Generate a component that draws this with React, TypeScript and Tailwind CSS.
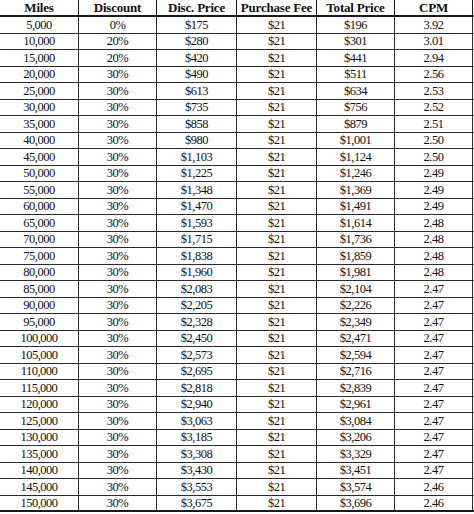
import React from "react";

const miles = Array.from({ length: 30 }, (_, i) => (5000 * (i + 1)).toLocaleString("en-US"));
const disc = ["0%", "20%", "20%", ...Array(27).fill("30%")];
const price = ["175","280","420","490","613","735","858","980","1,103","1,225","1,348","1,470","1,593","1,715","1,838","1,960","2,083","2,205","2,328","2,450","2,573","2,695","2,818","2,940","3,063","3,185","3,308","3,430","3,553","3,675"];
const total = ["196","301","441","511","634","756","879","1,001","1,124","1,246","1,369","1,491","1,614","1,736","1,859","1,981","2,104","2,226","2,349","2,471","2,594","2,716","2,839","2,961","3,084","3,206","3,329","3,451","3,574","3,696"];
const cpm = ["3.92","3.01","2.94","2.56","2.53","2.52","2.51","2.50","2.50","2.49","2.49","2.49","2.48","2.48","2.48","2.48",...Array(12).fill("2.47"),"2.46","2.46"];

const headers = ["Miles", "Discount", "Disc. Price", "Purchase Fee", "Total Price", "CPM"];

export default function App() {
  return (
    <div
      className="w-[474px] h-[514px] bg-white text-[#111] overflow-hidden"
      style={{ fontFamily: '"Liberation Serif", "Times New Roman", serif' }}
    >
      <div className="grid grid-cols-[79px_78px_80px_80px_78px_78px] h-[17px] border-b-2 border-[#1a1a1a]">
        {headers.map((h) => (
          <div key={h} className="border-r border-[#1a1a1a] flex items-center justify-center font-bold text-[13px] leading-none whitespace-nowrap tracking-[-0.2px] pb-[1px]">
            {h}
          </div>
        ))}
      </div>
      {miles.map((m, i) => (
        <div
          key={m}
          className={
            "grid grid-cols-[79px_78px_80px_80px_78px_78px] h-[16.5px] " +
            (i === 29 ? "border-b-2 border-[#1a1a1a]" : "border-b border-[#2a2a2a]")
          }
        >
          {[m, disc[i], "$" + price[i], "$21", "$" + total[i], cpm[i]].map((v, j) => (
            <div key={j} className="border-r border-[#2a2a2a] flex items-center justify-center text-[12.5px] leading-none tracking-[-0.5px]">
              {v}
            </div>
          ))}
        </div>
      ))}
    </div>
  );
}
